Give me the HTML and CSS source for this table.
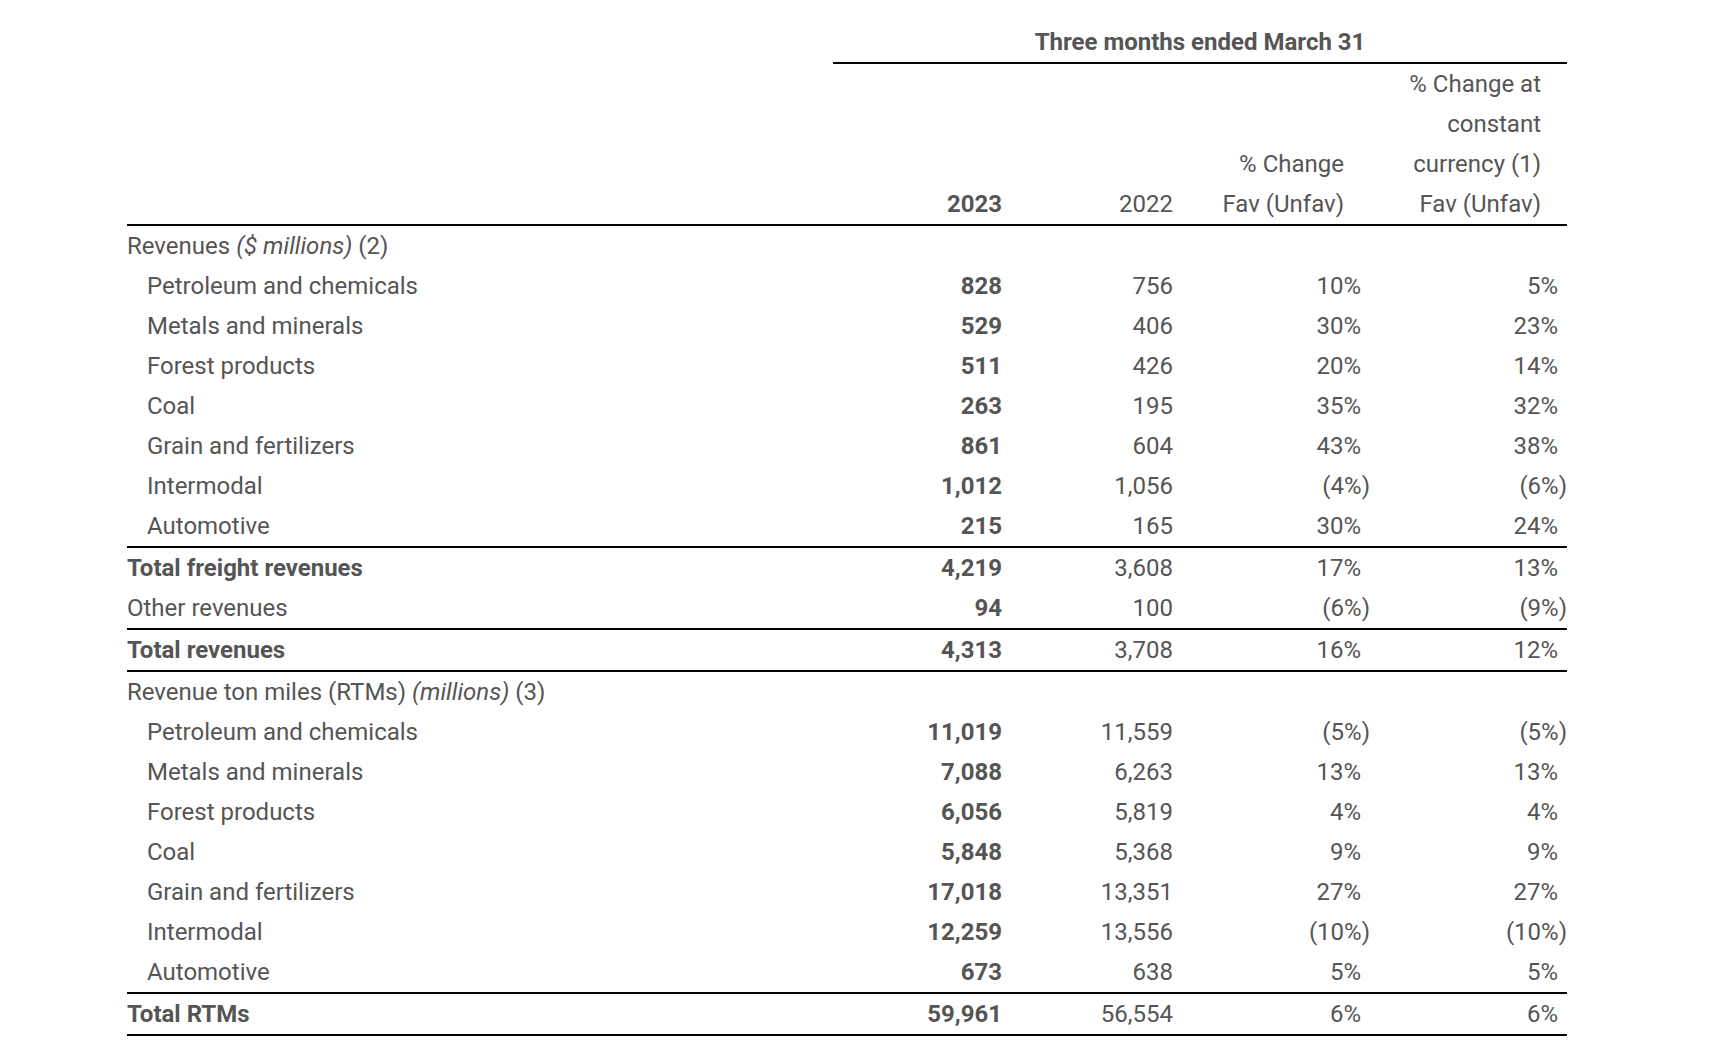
FILE: index.html
```html
<!DOCTYPE html>
<html lang="en">
<head>
    <meta charset="UTF-8">
    <title>Revenues - Three months ended March 31</title>
    <link rel="stylesheet" href="styles.css">
</head>
<body>

    <!-- Revenue table -->
    <table class="rev-table">
        <colgroup>
            <col class="col-label">
            <col class="col-num">
            <col class="col-num2">
            <col class="col-pct">
            <col class="col-pct">
        </colgroup>
        <thead>
            <tr class="period-row">
                <th></th>
                <th colspan="4" class="period">Three months ended March 31</th>
            </tr>
            <tr class="head-row">
                <th></th>
                <th class="year cur">2023</th>
                <th class="year">2022</th>
                <th class="pct-head">% Change<br>Fav (Unfav)</th>
                <th class="pct-head">% Change at<br>constant<br>currency (1)<br>Fav (Unfav)</th>
            </tr>
        </thead>
        <tbody>
            <tr>
                <td class="label">Revenues <em>($ millions)</em> (2)</td>
                <td></td><td></td><td></td><td></td>
            </tr>
            <tr>
                <td class="label sub">Petroleum and chemicals</td>
                <td class="cur">828</td><td>756</td><td class="pos">10%</td><td class="pos">5%</td>
            </tr>
            <tr>
                <td class="label sub">Metals and minerals</td>
                <td class="cur">529</td><td>406</td><td class="pos">30%</td><td class="pos">23%</td>
            </tr>
            <tr>
                <td class="label sub">Forest products</td>
                <td class="cur">511</td><td>426</td><td class="pos">20%</td><td class="pos">14%</td>
            </tr>
            <tr>
                <td class="label sub">Coal</td>
                <td class="cur">263</td><td>195</td><td class="pos">35%</td><td class="pos">32%</td>
            </tr>
            <tr>
                <td class="label sub">Grain and fertilizers</td>
                <td class="cur">861</td><td>604</td><td class="pos">43%</td><td class="pos">38%</td>
            </tr>
            <tr>
                <td class="label sub">Intermodal</td>
                <td class="cur">1,012</td><td>1,056</td><td>(4%)</td><td>(6%)</td>
            </tr>
            <tr>
                <td class="label sub">Automotive</td>
                <td class="cur">215</td><td>165</td><td class="pos">30%</td><td class="pos">24%</td>
            </tr>
            <tr class="total">
                <td class="label">Total freight revenues</td>
                <td class="cur">4,219</td><td>3,608</td><td class="pos">17%</td><td class="pos">13%</td>
            </tr>
            <tr>
                <td class="label">Other revenues</td>
                <td class="cur">94</td><td>100</td><td>(6%)</td><td>(9%)</td>
            </tr>
            <tr class="total">
                <td class="label">Total revenues</td>
                <td class="cur">4,313</td><td>3,708</td><td class="pos">16%</td><td class="pos">12%</td>
            </tr>
            <tr class="ruled">
                <td class="label">Revenue ton miles (RTMs) <em>(millions)</em> (3)</td>
                <td></td><td></td><td></td><td></td>
            </tr>
            <tr>
                <td class="label sub">Petroleum and chemicals</td>
                <td class="cur">11,019</td><td>11,559</td><td>(5%)</td><td>(5%)</td>
            </tr>
            <tr>
                <td class="label sub">Metals and minerals</td>
                <td class="cur">7,088</td><td>6,263</td><td class="pos">13%</td><td class="pos">13%</td>
            </tr>
            <tr>
                <td class="label sub">Forest products</td>
                <td class="cur">6,056</td><td>5,819</td><td class="pos">4%</td><td class="pos">4%</td>
            </tr>
            <tr>
                <td class="label sub">Coal</td>
                <td class="cur">5,848</td><td>5,368</td><td class="pos">9%</td><td class="pos">9%</td>
            </tr>
            <tr>
                <td class="label sub">Grain and fertilizers</td>
                <td class="cur">17,018</td><td>13,351</td><td class="pos">27%</td><td class="pos">27%</td>
            </tr>
            <tr>
                <td class="label sub">Intermodal</td>
                <td class="cur">12,259</td><td>13,556</td><td>(10%)</td><td>(10%)</td>
            </tr>
            <tr>
                <td class="label sub">Automotive</td>
                <td class="cur">673</td><td>638</td><td class="pos">5%</td><td class="pos">5%</td>
            </tr>
            <tr class="total last">
                <td class="label">Total RTMs</td>
                <td class="cur">59,961</td><td>56,554</td><td class="pos">6%</td><td class="pos">6%</td>
            </tr>
        </tbody>
    </table>

</body>
</html>
```

FILE: styles.css
```css
* {
    margin: 0;
    padding: 0;
    box-sizing: border-box;
}

body {
    font-family: Roboto, 'Liberation Sans', sans-serif;
    font-size: 24px;
    color: #555;
    background-color: white;
    padding: 22px 0 0 127px;
}

/* Table */
.rev-table {
    width: 1440px;
    border-collapse: collapse;
    table-layout: fixed;
}

.col-label { width: 706px; }
.col-num { width: 169px; }
.col-num2 { width: 171px; }
.col-pct { width: 197px; }

.rev-table th,
.rev-table td {
    height: 40px;
    line-height: 40px;
    text-align: right;
    font-weight: normal;
    white-space: nowrap;
    vertical-align: bottom;
}

.period-row th.period {
    font-weight: bold;
    text-align: center;
    border-bottom: 2px solid #000;
    vertical-align: middle;
}

.head-row th {
    border-bottom: 2px solid #000;
}

.head-row th.cur {
    font-weight: bold;
}

.pct-head {
    padding-right: 26px;
}

.rev-table td.label {
    text-align: left;
}

.rev-table td.sub {
    padding-left: 20px;
}

.rev-table td.cur {
    font-weight: bold;
}

.rev-table td.pos {
    padding-right: 9px;
}

.total td {
    border-top: 2px solid #000;
}

.total td.label {
    font-weight: bold;
}

.ruled td {
    border-top: 2px solid #000;
}

.last td {
    border-bottom: 2px solid #000;
}
```
